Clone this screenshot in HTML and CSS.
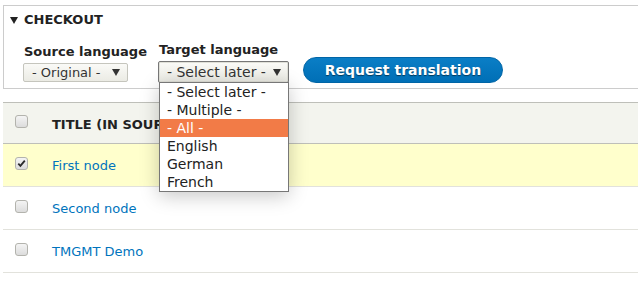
FILE: index.html
```html
<!DOCTYPE html>
<html>
<head>
<meta charset="utf-8">
<link rel="stylesheet" href="styles.css">
</head>
<body>
<div class="page">
  <div class="fieldset">
    <div class="legend"><span class="legend-arrow"></span>Checkout</div>
    <div class="form-row">
      <div class="item">
        <div class="label">Source language</div>
        <div class="select select-source"><span class="select-text">- Original -</span><span class="caret"></span></div>
      </div>
      <div class="item item-target">
        <div class="label">Target language</div>
        <div class="select select-target"><span class="select-text">- Select later -</span><span class="caret"></span></div>
        <ul class="dropdown">
          <li>- Select later -</li>
          <li>- Multiple -</li>
          <li class="active">- All -</li>
          <li>English</li>
          <li>German</li>
          <li>French</li>
        </ul>
      </div>
      <button class="btn">Request translation</button>
    </div>
  </div>
  <div class="grid">
    <div class="row head">
      <div class="cb-cell"><span class="cb"></span></div>
      <div class="title-cell">Title (in source language)</div>
    </div>
    <div class="row selected">
      <div class="cb-cell"><span class="cb"><svg viewBox="0 0 12 12" width="11" height="11"><path d="M2.5 6.2 L4.8 8.6 L9.6 2.8" fill="none" stroke="#2b2b2b" stroke-width="2"/></svg></span></div>
      <div class="cell"><a class="link">First node</a></div>
    </div>
    <div class="row">
      <div class="cb-cell"><span class="cb"></span></div>
      <div class="cell"><a class="link">Second node</a></div>
    </div>
    <div class="row">
      <div class="cb-cell"><span class="cb"></span></div>
      <div class="cell"><a class="link">TMGMT Demo</a></div>
    </div>
  </div>
</div>
</body>
</html>
```
FILE: styles.css
```css
html, body {
  margin: 0;
  padding: 0;
  background: #fff;
  overflow: hidden;
}
body {
  font-family: "DejaVu Sans", Verdana, sans-serif;
  font-size: 13px;
  color: #333;
}
.page {
  margin-left: 3px;
  padding-top: 5px;
  width: 640px;
}
.fieldset {
  border: 1px solid #ccc;
  padding: 6px 0 5px 19px;
}
.legend {
  position: relative;
  font-weight: bold;
  text-transform: uppercase;
  line-height: 16px;
  color: #222;
  margin-left: 1px;
}
.legend-arrow {
  position: absolute;
  left: -14px;
  top: 5px;
  width: 0;
  height: 0;
  border-left: 4px solid transparent;
  border-right: 4px solid transparent;
  border-top: 7px solid #222;
}
.form-row {
  display: flex;
  align-items: flex-end;
  gap: 11px;
  margin-top: 14px;
}
.item {
  position: relative;
  display: flex;
  flex-direction: column;
  align-items: flex-start;
}
.label {
  font-weight: bold;
  line-height: 16px;
  color: #222;
  margin-bottom: 3px;
  margin-left: 1px;
}
.select {
  box-sizing: border-box;
  height: 19px;
  display: flex;
  align-items: center;
  border: 1px solid #c5c5bd;
  border-radius: 2px;
  background: linear-gradient(#fafaf7, #ebebe4);
  color: #333;
  padding: 0 7px 0 8px;
  font-size: 13px;
  white-space: nowrap;
}
.select-source {
  width: 105px;
  margin-bottom: 1px;
}
.select-target {
  width: 131px;
  height: 22px;
  border-color: #777;
  padding-left: 8px;
  font-size: 14px;
  box-shadow: inset 0 0 0 1px #e0e0d8;
}
.select-text {
  flex: 1;
}
.caret {
  width: 0;
  height: 0;
  border-left: 4.5px solid transparent;
  border-right: 4.5px solid transparent;
  border-top: 7px solid #333;
}
.dropdown {
  position: absolute;
  z-index: 10;
  top: calc(100% - 1px);
  left: 1px;
  margin: 0;
  padding: 0;
  list-style: none;
  box-sizing: border-box;
  width: 130px;
  background: #fff;
  border: 1px solid #777;
  box-shadow: 0 4px 18px rgba(0, 0, 0, 0.22);
  font-size: 14px;
}
.dropdown li {
  height: 18px;
  line-height: 18px;
  padding-left: 7px;
  color: #222;
}
.dropdown li.active {
  background: #f27b47;
  color: #fff;
}
.btn {
  box-sizing: border-box;
  height: 26px;
  width: 200px;
  margin-left: 3px;
  border: 1px solid #0065a6;
  border-radius: 13px;
  background: linear-gradient(#0a7ec6, #006fb6);
  color: #fff;
  font-family: "DejaVu Sans", Verdana, sans-serif;
  font-weight: bold;
  font-size: 14px;
  text-shadow: 0 1px 1px rgba(0, 0, 0, 0.5);
  padding: 0;
}
.grid {
  margin-top: 13px;
  width: 640px;
}
.row {
  display: flex;
  align-items: center;
  height: 42px;
  border-bottom: 1px solid #e2e2dc;
}
.row.head {
  height: 40px;
  background: #f3f4ee;
  border-top: 1px solid #bebfb9;
  border-bottom: 1px solid #bebfb9;
}
.row.selected {
  background: #ffffcc;
}
.cb-cell {
  width: 37px;
  padding-left: 12px;
}
.title-cell {
  font-weight: bold;
  text-transform: uppercase;
  color: #222;
  white-space: nowrap;
  margin-top: 3px;
}
.cell {
  white-space: nowrap;
}
.cb {
  display: block;
  width: 13px;
  height: 13px;
  box-sizing: border-box;
  border: 1px solid #b3b3ad;
  border-radius: 3px;
  background: linear-gradient(#f4f4f4, #dcdcdc);
  margin-top: -3px;
  position: relative;
}
.cb svg {
  position: absolute;
  left: 0;
  top: 0;
}
.link {
  color: #0074bd;
  text-decoration: none;
}
```
